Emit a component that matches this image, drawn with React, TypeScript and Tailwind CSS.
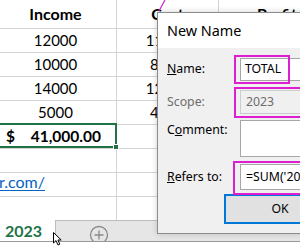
import React from "react";

const grid = "border-[#d4d4d4]";

function Row({
  h,
  a,
  b,
  c,
  bold,
  noBorder,
}: {
  h: string;
  a?: React.ReactNode;
  b?: React.ReactNode;
  c?: React.ReactNode;
  bold?: boolean;
  noBorder?: boolean;
}) {
  return (
    <div
      className={`flex ${h} ${noBorder ? "" : "border-b"} ${grid} ${
        bold ? "font-bold text-[16px]" : "text-[15px]"
      } text-black`}
    >
      <div className={`w-[122px] shrink-0 border-r ${grid} flex items-center justify-center`}>{a}</div>
      <div className={`w-[102px] shrink-0 border-r ${grid} flex items-center justify-center`}>{b}</div>
      <div className="flex-1 flex items-center justify-center">{c}</div>
    </div>
  );
}

export default function App() {
  return (
    <div className="relative w-[300px] h-[250px] overflow-hidden bg-white font-['Lato',sans-serif]">
      {/* Sheet */}
      <div className="ml-[-5px] w-[340px]">
        <Row h="h-[29px]" a="Income" b="Cost" c="Profit" bold />
        <Row h="h-[24px]" a="12000" b="11000" />
        <Row h="h-[24px]" a="10000" b="8000" />
        <Row h="h-[24px]" a="14000" b="12000" />
        <Row h="h-[24px]" a="5000" b="4000" />
        <div className={`flex h-[24px] border-b ${grid}`}>
          <div
            className={`w-[122px] shrink-0 border-r ${grid} flex items-center justify-between pl-[11px] pr-[15px] font-bold text-[15.5px] text-black`}
          >
            <span>$</span>
            <span>41,000.00</span>
          </div>
          <div className={`w-[102px] shrink-0 border-r ${grid}`} />
          <div className="flex-1" />
        </div>
        <Row h="h-[24px]" />
        <div className={`flex h-[24px] border-b ${grid}`}>
          <div className={`w-[122px] shrink-0 border-r ${grid} flex items-end pb-[2px] overflow-hidden`}>
            <span className="ml-[4px] text-[16px] text-[#0563c1] underline underline-offset-2">r.com/</span>
          </div>
          <div className={`w-[102px] shrink-0 border-r ${grid}`} />
          <div className="flex-1" />
        </div>
        <Row h="h-[23px]" noBorder />
      </div>

      {/* Selected total cell */}
      <div className="absolute left-[-3px] top-[123px] w-[120px] h-[25px] border-2 border-[#217346]" />
      <div className="absolute left-[113px] top-[144px] w-[6px] h-[6px] bg-[#217346] border border-white" />

      {/* Sheet tab bar */}
      <div className="flex h-[22px] border-b border-[#9a9a9a]">
        <div className="w-[55px] shrink-0 bg-white flex items-center pl-[5px] text-[16px] font-bold text-[#217346]">
          2023
        </div>
        <div className="flex-1 bg-[#e6e6e6] border-t border-l border-[#bdbdbd] flex items-start pl-[33px] overflow-hidden">
          <svg width="20" height="22" viewBox="0 0 20 22" className="mt-[3px]">
            <circle cx="10" cy="11" r="8.5" fill="none" stroke="#8a8a8a" strokeWidth="1.3" />
            <path d="M10 6.5v9M5.5 11h9" stroke="#8a8a8a" strokeWidth="1.3" />
          </svg>
        </div>
      </div>

      {/* Mouse cursor */}
      <svg className="absolute left-[53px] top-[232px]" width="10" height="14" viewBox="0 0 10 14">
        <path d="M0.5 0.5 L0.5 11 L3 8.6 L5 13 L6.8 12.2 L4.9 8 L8.2 8 Z" fill="white" stroke="black" strokeWidth="1" />
      </svg>

      {/* Annotation stroke */}
      <svg className="absolute left-[158px] top-0" width="10" height="12" viewBox="0 0 10 12">
        <path d="M1 11 L7 0" stroke="#d61fc7" strokeWidth="1.2" fill="none" />
      </svg>

      {/* Dialog */}
      <div className="absolute left-[157px] top-[12px] w-[190px] h-[222px] border border-[#8c8c8c] bg-[#f0f0f0] shadow-[0_0_6px_rgba(0,0,0,0.18)] font-['Noto_Sans',sans-serif] text-[12.3px] text-black">
        <div className="h-[35px] bg-white flex items-center pl-[9px] text-[14.4px]">New Name</div>
        <div className="flex flex-col pt-[10px]">
          {/* Name */}
          <div className="flex items-center h-[23px]">
            <div className="w-[82px] shrink-0 pl-[9px]">
              <span className="underline">N</span>ame:
            </div>
            <div className="relative flex-1 h-full bg-white border border-[#a6a6a6] flex items-center pl-[4px]">
              TOTAL
              <div className="absolute left-[-7px] top-[-4px] w-[56px] h-[29px] border-2 border-[#dd1fcf]" />
            </div>
          </div>
          {/* Scope */}
          <div className="flex items-center h-[24px] mt-[9px]">
            <div className="w-[82px] shrink-0 pl-[9px] text-[#6d6d6d]">Scope:</div>
            <div className="relative flex-1 h-full bg-[#f0f0f0] border border-[#cccccc] flex items-center pl-[5px] text-[#6d6d6d]">
              2023
              <div className="absolute left-[-7px] top-[-4px] right-[-4px] h-[31px] border-2 border-[#dd1fcf]" />
            </div>
          </div>
          {/* Comment */}
          <div className="flex items-start h-[37px] mt-[6px]">
            <div className="w-[82px] shrink-0 pl-[9px] mt-[1px]">
              C<span className="underline">o</span>mment:
            </div>
            <div className="flex-1 h-full bg-white border border-[#a6a6a6]" />
          </div>
          {/* Refers to */}
          <div className="flex items-center h-[26px] mt-[7px]">
            <div className="w-[82px] shrink-0 pl-[9px]">
              <span className="underline">R</span>efers to:
            </div>
            <div className="relative flex-1 h-full bg-white border border-[#a6a6a6] flex items-center pl-[5px]">
              =SUM('2023'!B5)
              <div className="absolute left-[-8px] top-[-4px] right-[-4px] h-[34px] border-2 border-[#dd1fcf]" />
            </div>
          </div>
          {/* OK */}
          <div className="flex mt-[4px]">
            <div className="ml-[66px] w-[112px] h-[30px] bg-[#e1e1e1] border-2 border-[#0078d7] flex items-center justify-center">
              OK
            </div>
          </div>
        </div>
      </div>
    </div>
  );
}
